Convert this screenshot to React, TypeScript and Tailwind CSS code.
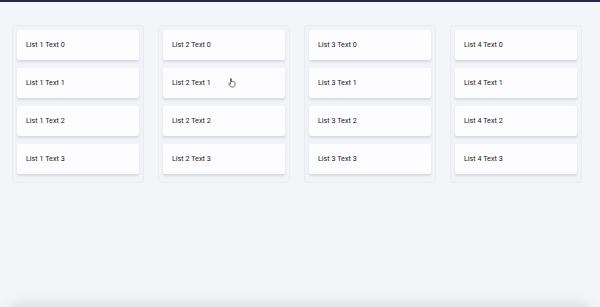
import React from "react";

const lists = [1, 2, 3, 4];
const items = [0, 1, 2, 3];

function Hand() {
  return (
    <svg width="9" height="10" viewBox="0 0 9 10" className="absolute left-[65px] top-[10px]">
      <path
        d="M2.5 1 C2.5 0.4 3.5 0.4 3.5 1 L3.5 4 L3.8 3.6 C4 3.2 4.8 3.3 4.8 3.8 L5 3.8 C5.2 3.4 6 3.5 6 4 C6.2 3.7 7 3.8 7 4.4 L7 6.8 C7 8 6.2 9 5 9 L3.8 9 C3 9 2.5 8.6 2 7.9 L0.8 6 C0.5 5.5 1.1 5 1.6 5.4 L2.5 6.2 Z"
        fill="#ffffff"
        stroke="#3a3a3a"
        strokeWidth="0.7"
      />
    </svg>
  );
}

export default function App() {
  return (
    <div
      className="h-[307px] w-[600px] overflow-hidden flex flex-col bg-[#f4f5f9]"
      style={{ fontFamily: "Roboto, 'Noto Sans', sans-serif" }}
    >
      <div className="h-[2px] bg-[#28254a] shrink-0" />
      <div className="flex gap-[14px] pl-[12px] pt-[23px]">
        {lists.map((l) => (
          <div
            key={l}
            className="w-[132px] border border-[#e8ebf1] bg-[#f2f3f8] rounded-[3px] pt-[4px] px-[4px] pb-[0px]"
          >
            {items.map((i) => (
              <div
                key={i}
                className="relative h-[30px] mb-[8px] bg-[#fdfdff] rounded-[2px] shadow-[0_2px_2px_rgba(30,40,70,0.12)] flex items-center pl-[9px] pt-[1px] text-[7.2px] text-[#1a1a1a]"
              >
                List {l} Text {i}
                {l === 2 && i === 1 && <Hand />}
              </div>
            ))}
          </div>
        ))}
      </div>
      <div className="mt-auto mx-[14px] h-[6px] translate-y-[6px] rounded-t-[10px] bg-[#dcdfe5] shadow-[0_0_10px_6px_#e0e2e7]" />
    </div>
  );
}
